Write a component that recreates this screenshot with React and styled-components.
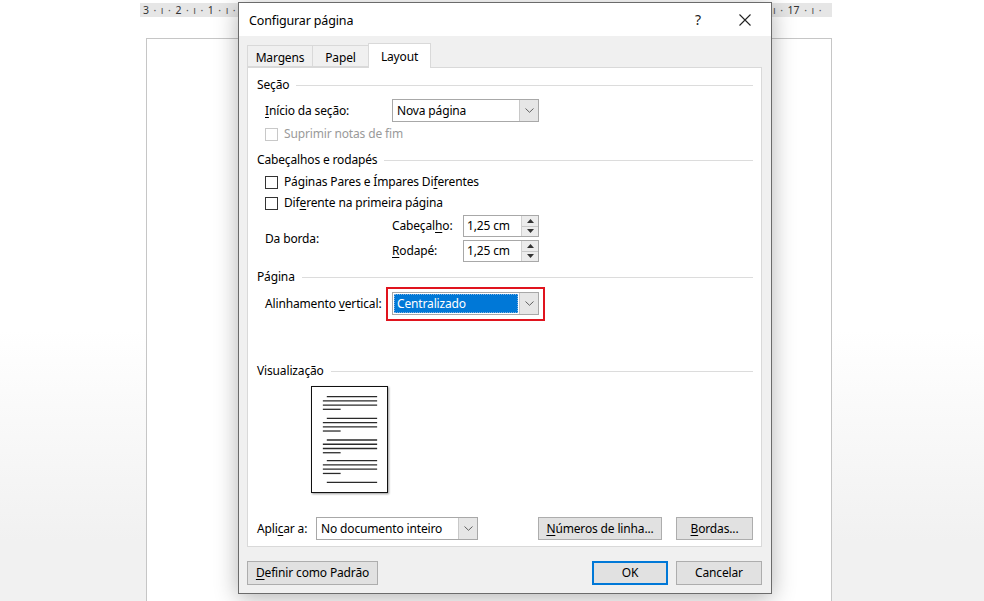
import React from "react";
import styled, { createGlobalStyle } from "styled-components";

const Global = createGlobalStyle`
  html, body { margin: 0; padding: 0; background: #fff; }
  body { font-family: "Noto Sans", "Liberation Sans", sans-serif; }
`;

const Chevron = () => (
  <svg width="9" height="5" viewBox="0 0 9 5">
    <path d="M0.5 0.5 L4.5 4.3 L8.5 0.5" fill="none" stroke="#606060" strokeWidth="1" />
  </svg>
);

const U = styled.span`
  text-decoration: underline;
  text-underline-offset: 2px;
`;

function Combo({ value, width, selected }) {
  return (
    <ComboBox $width={width}>
      <ComboText $selected={selected}>
        {selected ? <Highlight>{value}</Highlight> : value}
      </ComboText>
      <ComboArrow>
        <Chevron />
      </ComboArrow>
    </ComboBox>
  );
}

function Spin({ value }) {
  return (
    <SpinBox>
      <SpinText>{value}</SpinText>
      <SpinArrows>
        <SpinHalf>
          <svg width="7" height="4" viewBox="0 0 7 4"><path d="M0 4 L3.5 0 L7 4Z" fill="#333" /></svg>
        </SpinHalf>
        <SpinHalf $bottom>
          <svg width="7" height="4" viewBox="0 0 7 4"><path d="M0 0 L3.5 4 L7 0Z" fill="#333" /></svg>
        </SpinHalf>
      </SpinArrows>
    </SpinBox>
  );
}

function Check({ label, disabled }) {
  return (
    <CheckRow $disabled={disabled}>
      <Box $disabled={disabled} />
      <span>{label}</span>
    </CheckRow>
  );
}

function RulerUnit({ n }) {
  return (
    <Unit>
      {n && <span>{n}</span>}
      <span>·</span>
      <span>ı</span>
      <span>·</span>
    </Unit>
  );
}

function PreviewPage() {
  const groups = [395, 417, 439, 460];
  const lines = [];
  groups.forEach((y0, g) => {
    const y = y0 - 386;
    lines.push(<line key={g + "a"} x1="15" x2="66" y1={y} y2={y} />);
    lines.push(<line key={g + "b"} x1="11" x2="66" y1={y + 4.3} y2={y + 4.3} />);
    lines.push(<line key={g + "c"} x1="11" x2="66" y1={y + 8.6} y2={y + 8.6} />);
    lines.push(<line key={g + "d"} x1="11" x2="29" y1={y + 12.9} y2={y + 12.9} />);
  });
  lines.push(<line key="last" x1="15" x2="66" y1={96} y2={96} />);
  return (
    <Preview>
      <svg width="76" height="106" viewBox="0 0 76 106">
        <g stroke="#2a2a2a" strokeWidth="1.3">{lines}</g>
      </svg>
    </Preview>
  );
}

export default function App() {
  return (
    <Screen>
      <Global />
      <Ruler>
        <RulerGroup>
          <RulerUnit n="3" />
          <RulerUnit n="2" />
          <RulerUnit n="1" />
        </RulerGroup>
        <RulerGroup>
          <RulerUnit />
          <RulerUnit n="17" />
        </RulerGroup>
      </Ruler>
      <Page />

      <Dialog>
        <TitleBar>
          <Title>Configurar página</Title>
          <TitleButtons>
            <Help>?</Help>
            <svg width="12" height="12" viewBox="0 0 12 12">
              <path d="M0.5 0.5 L11.5 11.5 M11.5 0.5 L0.5 11.5" stroke="#222" strokeWidth="1.1" />
            </svg>
          </TitleButtons>
        </TitleBar>

        <Body>
          <Tabs>
            <Tab $w={66}>Margens</Tab>
            <Tab $w={57}>Papel</Tab>
            <Tab $w={63} $active>Layout</Tab>
          </Tabs>

          <Panel>
            <SectionHeader $mt={9}>Seção</SectionHeader>
            <FieldRow $mt={6}>
              <Label><U>I</U>nício da seção:</Label>
              <Combo value="Nova página" width={147} />
            </FieldRow>
            <Indent $mt={5}>
              <Check label="Suprimir notas de fim" disabled />
            </Indent>

            <SectionHeader $mt={11}>Cabeçalhos e rodapés</SectionHeader>
            <Indent $mt={7}>
              <Check label={<>Páginas Pares e Ímpares Di<U>f</U>erentes</>} />
            </Indent>
            <Indent $mt={7}>
              <Check label={<>Dif<U>e</U>rente na primeira página</>} />
            </Indent>
            <FieldRow $mt={5}>
              <Label>Da borda:</Label>
              <SpinGroup>
                <SpinRow>
                  <SmallLabel>Cabeçal<U>h</U>o:</SmallLabel>
                  <Spin value="1,25 cm" />
                </SpinRow>
                <SpinRow>
                  <SmallLabel><U>R</U>odapé:</SmallLabel>
                  <Spin value="1,25 cm" />
                </SpinRow>
              </SpinGroup>
            </FieldRow>

            <SectionHeader $mt={7}>Página</SectionHeader>
            <FieldRow $mt={7}>
              <Label>Alinhamento <U>v</U>ertical:</Label>
              <Marked>
                <Combo value="Centralizado" width={147} selected />
              </Marked>
            </FieldRow>

            <SectionHeader $mt={48}>Visualização</SectionHeader>
            <PreviewWrap $mt={7}>
              <PreviewPage />
            </PreviewWrap>

            <BottomRow $mt={24}>
              <ApplyLabel>Apli<U>c</U>ar a:</ApplyLabel>
              <Combo value="No documento inteiro" width={162} />
              <Spacer />
              <Button $w={124}><U>N</U>úmeros de linha...</Button>
              <Button $w={77} $ml={14}><U>B</U>ordas...</Button>
            </BottomRow>
          </Panel>

          <Footer>
            <Button $w={131} $h={24}><U>D</U>efinir como Padrão</Button>
            <Spacer />
            <Button $w={76} $h={24} $default>OK</Button>
            <Button $w={86} $h={24} $ml={8}>Cancelar</Button>
          </Footer>
        </Body>
      </Dialog>
    </Screen>
  );
}

const Screen = styled.div`
  position: relative;
  width: 984px;
  height: 601px;
  overflow: hidden;
  background: linear-gradient(#fff 0%, #fff 55%, #f1f1f1 90%);
`;

const Ruler = styled.div`
  margin: 3px 0 0 140px;
  width: 692px;
  height: 14px;
  background: #e6e6e6;
  display: flex;
  justify-content: space-between;
  align-items: center;
  padding: 0 6px 0 3px;
  box-sizing: border-box;
`;

const RulerGroup = styled.div`
  display: flex;
  align-items: center;
`;

const Unit = styled.div`
  display: flex;
  align-items: center;
  gap: 4.5px;
  padding-right: 4.5px;
  font-size: 10.5px;
  line-height: 12px;
  color: #555;
  span:first-child {
    color: #333;
  }
`;

const Page = styled.div`
  margin: 21px 0 0 146px;
  width: 686px;
  height: 600px;
  background: #fff;
  border: 1px solid #c6c6c6;
  box-sizing: border-box;
`;

const Dialog = styled.div`
  position: absolute;
  left: 238px;
  top: 2px;
  width: 534px;
  height: 592px;
  box-sizing: border-box;
  border: 1px solid #6b6b6b;
  background: #f0f0f0;
  box-shadow: 0 4px 22px rgba(0, 0, 0, 0.3);
  display: flex;
  flex-direction: column;
  font-size: 12px;
  line-height: 16px;
  letter-spacing: -0.15px;
  color: #000;
`;

const TitleBar = styled.div`
  height: 33px;
  background: #fff;
  display: flex;
  align-items: center;
  justify-content: space-between;
  padding: 0 20px 0 10px;
  flex-shrink: 0;
`;

const Title = styled.div`
  font-size: 12.5px;
  padding-top: 2px;
`;

const TitleButtons = styled.div`
  display: flex;
  align-items: center;
  gap: 38px;
`;

const Help = styled.span`
  font-size: 14px;
  color: #222;
`;

const Body = styled.div`
  flex: 1;
  display: flex;
  flex-direction: column;
  padding: 7px 9px 0 8px;
`;

const Tabs = styled.div`
  display: flex;
  align-items: flex-end;
  height: 24px;
  position: relative;
  z-index: 1;
`;

const Tab = styled.div`
  width: ${(p) => p.$w}px;
  height: ${(p) => (p.$active ? 25 : 22)}px;
  box-sizing: border-box;
  display: flex;
  align-items: center;
  justify-content: center;
  border: 1px solid #d9d9d9;
  border-bottom: ${(p) => (p.$active ? "none" : "1px solid #d9d9d9")};
  background: ${(p) => (p.$active ? "#fff" : "#f0f0f0")};
  margin-right: -1px;
  margin-bottom: ${(p) => (p.$active ? -1 : 0)}px;
  padding-top: ${(p) => (p.$active ? 1 : 3)}px;
`;

const Panel = styled.div`
  height: 480px;
  box-sizing: border-box;
  background: #fff;
  border: 1px solid #d9d9d9;
  padding: 0 8px 0 9px;
  display: flex;
  flex-direction: column;
`;

const SectionHeader = styled.div`
  margin-top: ${(p) => p.$mt}px;
  height: 16px;
  display: flex;
  align-items: center;
  gap: 7px;
  white-space: nowrap;
  &::after {
    content: "";
    flex: 1;
    height: 1px;
    background: #dcdcdc;
  }
`;

const FieldRow = styled.div`
  margin-top: ${(p) => p.$mt}px;
  margin-left: 8px;
  display: flex;
  align-items: center;
`;

const Indent = styled.div`
  margin-top: ${(p) => p.$mt}px;
  margin-left: 8px;
`;

const Label = styled.div`
  width: 127px;
  white-space: nowrap;
`;

const SmallLabel = styled.div`
  width: 71px;
  white-space: nowrap;
`;

const CheckRow = styled.div`
  display: flex;
  align-items: center;
  gap: 6px;
  height: 14px;
  color: ${(p) => (p.$disabled ? "#9a9a9a" : "#000")};
`;

const Box = styled.div`
  width: 13px;
  height: 13px;
  box-sizing: border-box;
  border: 1px solid ${(p) => (p.$disabled ? "#c8c8c8" : "#333")};
  background: #fff;
`;

const ComboBox = styled.div`
  width: ${(p) => p.$width}px;
  height: 23px;
  box-sizing: border-box;
  border: 1px solid #a8a8a8;
  background: #fff;
  display: flex;
  align-items: stretch;
`;

const ComboText = styled.div`
  flex: 1;
  display: flex;
  align-items: center;
  padding: ${(p) => (p.$selected ? "1px" : "0 4px")};
  white-space: nowrap;
`;

const Highlight = styled.span`
  display: flex;
  align-items: center;
  width: 100%;
  height: 100%;
  box-sizing: border-box;
  padding-left: 3px;
  background: #0078d7;
  color: #fff;
  outline: 1px dotted #7fb0e0;
  outline-offset: -1px;
`;

const ComboArrow = styled.div`
  width: 18px;
  border-left: 1px solid #c8c8c8;
  background: #e6e6e6;
  display: flex;
  align-items: center;
  justify-content: center;
`;

const Marked = styled.div`
  position: relative;
  &::after {
    content: "";
    position: absolute;
    left: -6px;
    right: -6px;
    top: -5px;
    bottom: -6px;
    border: 2px solid #e0141e;
    pointer-events: none;
  }
`;

const SpinGroup = styled.div`
  display: flex;
  flex-direction: column;
  gap: 3px;
`;

const SpinRow = styled.div`
  display: flex;
  align-items: center;
`;

const SpinBox = styled.div`
  width: 76px;
  height: 22px;
  box-sizing: border-box;
  border: 1px solid #a8a8a8;
  background: #fff;
  display: flex;
  align-items: stretch;
`;

const SpinText = styled.div`
  flex: 1;
  display: flex;
  align-items: center;
  padding-left: 3px;
  white-space: nowrap;
`;

const SpinArrows = styled.div`
  width: 16px;
  display: flex;
  flex-direction: column;
  border-left: 1px solid #d0d0d0;
`;

const SpinHalf = styled.div`
  flex: 1;
  display: flex;
  align-items: center;
  justify-content: center;
  background: #ececec;
  border-top: ${(p) => (p.$bottom ? "1px solid #c8c8c8" : "none")};
`;

const PreviewWrap = styled.div`
  margin-top: ${(p) => p.$mt}px;
  margin-left: 54px;
`;

const Preview = styled.div`
  width: 77px;
  height: 107px;
  box-sizing: border-box;
  border: 1px solid #111;
  background: #fff;
  box-shadow: 1px 1px 2px rgba(0, 0, 0, 0.4);
  display: flex;
`;

const BottomRow = styled.div`
  margin-top: ${(p) => p.$mt}px;
  display: flex;
  align-items: center;
`;

const ApplyLabel = styled.div`
  width: 59px;
  white-space: nowrap;
`;

const Spacer = styled.div`
  flex: 1;
`;

const Button = styled.div`
  width: ${(p) => p.$w}px;
  height: ${(p) => p.$h || 23}px;
  margin-left: ${(p) => p.$ml || 0}px;
  box-sizing: border-box;
  display: flex;
  align-items: center;
  justify-content: center;
  background: #e1e1e1;
  border: 1px solid ${(p) => (p.$default ? "#0078d7" : "#adadad")};
  box-shadow: ${(p) => (p.$default ? "inset 0 0 0 1px #0078d7" : "none")};
  white-space: nowrap;
`;

const Footer = styled.div`
  margin-top: 14px;
  display: flex;
  align-items: center;
`;
